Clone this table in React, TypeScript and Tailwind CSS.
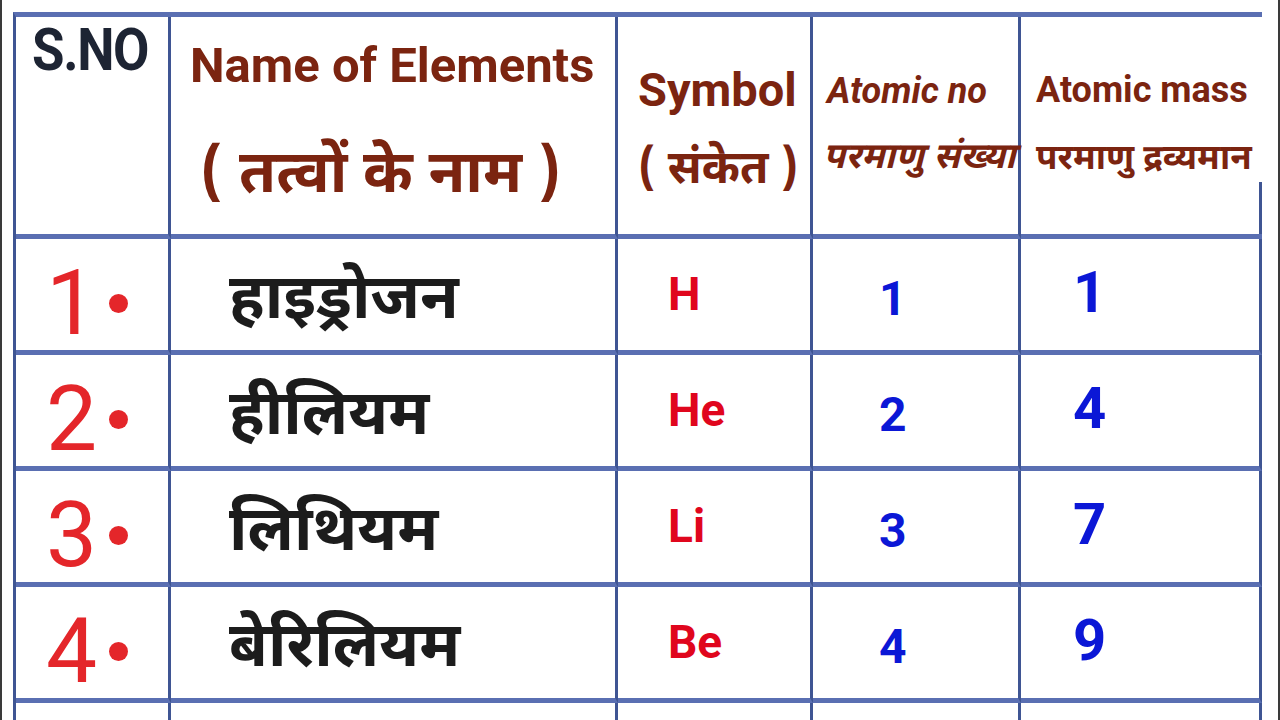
import React from 'react'

const latin = "font-['Roboto','Liberation_Sans',sans-serif]"
const deva = "font-['Noto_Sans_Devanagari','Noto_Sans','Lohit_Devanagari','Noto_Sans_CJK_SC',sans-serif]"

const hLine = 'border-b-[5px] border-b-[#5a6fb2]'
const vLine = 'border-r-[3px] border-r-[#3f5593]'

const rows = [
  { no: '1', name: 'हाइड्रोजन', sym: 'H', z: '1', mass: '1' },
  { no: '2', name: 'हीलियम', sym: 'He', z: '2', mass: '4' },
  { no: '3', name: 'लिथियम', sym: 'Li', z: '3', mass: '7' },
  { no: '4', name: 'बेरिलियम', sym: 'Be', z: '4', mass: '9' },
]

function Row({ no, name, sym, z, mass }: { no: string; name: string; sym: string; z: string; mass: string }) {
  return (
    <>
      <div className={`h-[116px] ${hLine} ${vLine} flex items-start pl-[30px] pt-[19px]`}>
        <span className={`${latin} text-[91px] leading-none font-normal text-[#e4262a]`}>{no}</span>
        <span className="ml-[12px] mt-[36px] w-[19px] h-[19px] rounded-full bg-[#e4262a]" />
      </div>
      <div className={`h-[116px] ${hLine} ${vLine} pl-[58px] pt-[33px]`}>
        <span className={`${deva} block text-[63px] leading-none font-bold text-[#1c1c1c]`}>{name}</span>
      </div>
      <div className={`h-[116px] ${hLine} ${vLine} pl-[50px] pt-[32px]`}>
        <span className={`${latin} text-[46px] leading-none font-bold text-[#e0061d]`}>{sym}</span>
      </div>
      <div className={`h-[116px] ${hLine} ${vLine} pl-[66px] pt-[36px]`}>
        <span className={`${latin} text-[48px] leading-none font-bold text-[#0b17d6]`}>{z}</span>
      </div>
      <div className={`h-[116px] ${hLine} ${vLine} pl-[52px] pt-[24px]`}>
        <span className={`${latin} text-[58px] leading-none font-bold text-[#0b17d6]`}>{mass}</span>
      </div>
    </>
  )
}

export default function App() {
  return (
    <div className="w-[1280px] h-[720px] overflow-hidden bg-white border-x-2 border-x-[#3a3a3a]">
      <div className="ml-[11px] mt-[12px] w-[1249px] border-l-[3px] border-l-[#3f5593] border-t-[5px] border-t-[#5a6fb2] grid grid-cols-[155px_447px_195px_208px_241px]">
        {/* header */}
        <div className={`h-[222px] ${hLine} ${vLine} pl-[16px] pt-[3px]`}>
          <span className={`${latin} inline-block origin-left scale-x-[0.88] text-[60px] leading-none font-bold tracking-[-1.5px] text-[#1d2433]`}>S.NO</span>
        </div>
        <div className={`h-[222px] ${hLine} ${vLine} flex flex-col pl-[19px] pt-[24px] text-[#7b2410]`}>
          <span className={`${latin} text-[49px] leading-none font-bold`}>Name of Elements</span>
          <span className={`${deva} text-[60px] leading-none font-bold mt-[57px] pl-[10px]`}>( तत्वों के नाम )</span>
        </div>
        <div className={`h-[222px] ${hLine} ${vLine} flex flex-col pl-[20px] pt-[49px] text-[#7b2410]`}>
          <span className={`${latin} text-[47px] leading-none font-bold`}>Symbol</span>
          <span className={`${deva} text-[46px] leading-none font-bold mt-[36px]`}>( संकेत )</span>
        </div>
        <div className={`h-[222px] ${hLine} ${vLine} flex flex-col pl-[10px] pt-[56px] text-[#7b2410]`}>
          <span className={`${latin} text-[36px] leading-none font-bold italic pl-[4px]`}>Atomic no</span>
          <span className={`${deva} text-[36px] leading-none font-bold italic mt-[33px] whitespace-nowrap`}>परमाणु संख्या</span>
        </div>
        <div className={`relative h-[222px] ${hLine} flex flex-col pl-[15px] pt-[55px] text-[#7b2410]`}>
          <span className={`${latin} text-[36px] leading-none font-bold`}>Atomic mass</span>
          <span className={`${deva} text-[35px] leading-none font-bold mt-[35px] whitespace-nowrap`}>परमाणु द्रव्यमान</span>
          <span className="absolute right-0 bottom-0 w-[3px] h-[52px] bg-[#3f5593]" />
        </div>

        {rows.map((r) => (
          <Row key={r.no} {...r} />
        ))}

        {/* partial next row */}
        <div className={`h-[40px] ${vLine}`} />
        <div className={`h-[40px] ${vLine}`} />
        <div className={`h-[40px] ${vLine}`} />
        <div className={`h-[40px] ${vLine}`} />
        <div className={`h-[40px] ${vLine}`} />
      </div>
    </div>
  )
}
